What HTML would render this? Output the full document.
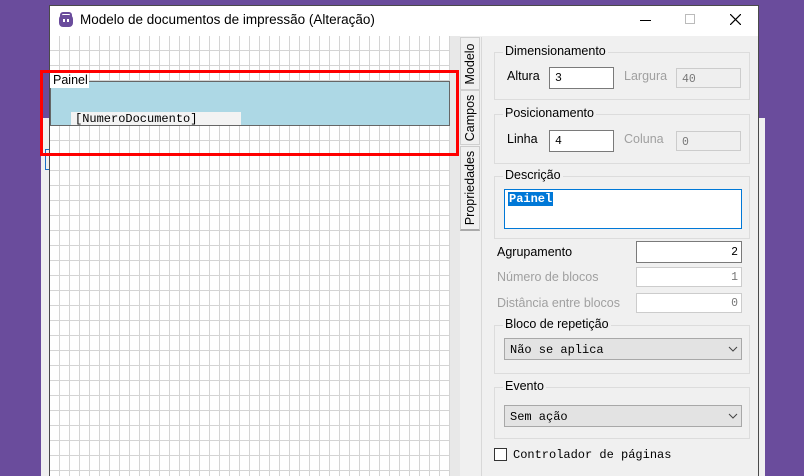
<!DOCTYPE html>
<html><head><meta charset="utf-8"><style>
*{box-sizing:border-box;margin:0;padding:0}
body{width:804px;height:476px;overflow:hidden;background:#6a4c9c;position:relative;font-family:"Liberation Sans",sans-serif;font-size:12px;color:#000}
.a{position:absolute}
.mono{font-family:"Liberation Mono",monospace;font-size:11.5px}
.grp{position:absolute;border:1px solid #dcdcdc;}
.grp .t{position:absolute;top:-9px;left:8px;background:#f0f0f0;padding:0 2px;font-size:12.5px}
.in{position:absolute;background:#fff;border:1px solid #7a7a7a;height:22px;padding:4px 0 0 5px}
.dis{background:#efefef;border:1px solid #ccc;color:#777}
.lbl{position:absolute;font-size:12.5px}
.g{color:#a0a0a0}
.sel{position:absolute;background:#e3e3e3;border:1px solid #a8a8a8;height:22px;padding:4px 0 0 5px}
.tab{position:absolute;left:460px;width:20px;border:1px solid #d0d0d0;background:#f0f0f0}
.tab span{position:absolute;left:50%;top:50%;transform:translate(-50%,-50%) rotate(-90deg);white-space:nowrap;font-size:12.5px}
</style></head><body>
<div class="a" style="left:41px;top:118px;width:12px;height:358px;background:#f0f0f0"></div>
<div class="a" style="left:45px;top:149px;width:6px;height:21px;border:1px solid #1a6fc9;border-right:none"></div>
<div class="a" style="left:756px;top:118px;width:9px;height:358px;background:#f0f0f0"></div>
<div class="a" style="left:49px;top:5px;width:710px;height:471px;background:#f0f0f0;border:1px solid #4a4a4a;border-bottom:none"></div>
<div class="a" style="left:50px;top:6px;width:708px;height:30px;background:#fff"></div>
<svg class="a" style="left:58px;top:12px" width="16" height="16" viewBox="0 0 16 16"><rect x="1" y="3" width="14" height="12" rx="4" fill="#6a4c9c"/><rect x="3" y="1" width="10" height="5" rx="2" fill="none" stroke="#6a4c9c" stroke-width="2"/><rect x="5" y="7" width="2" height="3" fill="#fff"/><rect x="9" y="7" width="2" height="3" fill="#fff"/></svg>
<div class="a" style="left:80px;top:12px;font-size:13.5px">Modelo de documentos de impressão (Alteração)</div>
<div class="a" style="left:640px;top:20px;width:11px;height:1px;background:#000"></div>
<div class="a" style="left:685px;top:14px;width:10px;height:10px;border:1px solid #bbb"></div>
<svg class="a" style="left:730px;top:14px" width="11" height="11"><path d="M0 0L11 11M11 0L0 11" stroke="#000" stroke-width="1.2"/></svg>
<div class="a" style="left:50px;top:36px;width:400px;height:440px;background-color:#fff;background-image:linear-gradient(90deg,#d4d4d4 1px,transparent 1px),linear-gradient(#d4d4d4 1px,transparent 1px);background-size:10px 15px;background-position:9px 14px"></div>
<div class="a" style="left:450px;top:36px;width:10px;height:440px;background:#e8e8e8"></div>
<div class="a" style="left:50px;top:81px;width:400px;height:45px;background:#add8e5;border:1px solid #666"></div>
<div class="a" style="left:50px;top:72px;width:39px;height:16px;background:#fff;padding:1px 0 0 3px;font-size:12.5px">Painel</div>
<div class="a mono" style="left:71px;top:112px;width:170px;height:13px;background:#f3f3f3;padding:0 0 0 4px;line-height:14px;font-size:12px">[NumeroDocumento]</div>
<div class="a" style="left:40px;top:70px;width:419px;height:86px;border:3px solid #f00"></div>
<div class="tab" style="top:37px;height:53px"><span>Modelo</span></div>
<div class="tab" style="top:90px;height:55px"><span>Campos</span></div>
<div class="tab" style="top:146px;height:85px;border-color:#ccc;border-bottom:2px solid #aaa"><span>Propriedades</span></div>
<div class="a" style="left:481px;top:37px;width:1px;height:439px;background:#d8d8d8"></div>
<div class="grp" style="left:494px;top:52px;width:256px;height:48px"><div class="t">Dimensionamento</div></div>
<div class="lbl" style="left:507px;top:69px">Altura</div>
<div class="in mono" style="left:549px;top:67px;width:65px">3</div>
<div class="lbl g" style="left:624px;top:69px">Largura</div>
<div class="in mono dis" style="left:676px;top:68px;width:65px;height:20px">40</div>
<div class="grp" style="left:494px;top:114px;width:256px;height:50px"><div class="t">Posicionamento</div></div>
<div class="lbl" style="left:507px;top:132px">Linha</div>
<div class="in mono" style="left:549px;top:130px;width:65px">4</div>
<div class="lbl g" style="left:624px;top:132px">Coluna</div>
<div class="in mono dis" style="left:676px;top:131px;width:65px;height:20px">0</div>
<div class="grp" style="left:494px;top:176px;width:256px;height:63px"><div class="t">Descrição</div></div>
<div class="a" style="left:504px;top:189px;width:238px;height:40px;background:#fff;border:1px solid #0078d7"></div>
<div class="a mono" style="left:508px;top:192px;background:#0078d7;color:#fff;padding:0 1px;font-weight:bold;font-size:12px">Painel</div>
<div class="lbl" style="left:497px;top:245px">Agrupamento</div>
<div class="in mono" style="left:636px;top:241px;width:106px;text-align:right;padding-right:3px">2</div>
<div class="lbl g" style="left:497px;top:270px">Número de blocos</div>
<div class="in mono" style="left:636px;top:267px;width:106px;border-color:#ccc;color:#777;height:20px;padding-top:3px;text-align:right;padding-right:3px">1</div>
<div class="lbl g" style="left:497px;top:296px">Distância entre blocos</div>
<div class="in mono" style="left:636px;top:293px;width:106px;border-color:#ccc;color:#777;height:20px;padding-top:3px;text-align:right;padding-right:3px">0</div>
<div class="grp" style="left:494px;top:325px;width:256px;height:49px"><div class="t">Bloco de repetição</div></div>
<div class="sel mono" style="left:504px;top:338px;width:238px;font-size:12px">Não se aplica</div>
<div class="grp" style="left:494px;top:387px;width:256px;height:52px"><div class="t">Evento</div></div>
<div class="sel mono" style="left:504px;top:405px;width:238px;font-size:12px">Sem ação</div>
<svg class="a" style="left:728px;top:346px" width="10" height="6"><path d="M1 1L5 5L9 1" stroke="#444" fill="none"/></svg>
<svg class="a" style="left:728px;top:413px" width="10" height="6"><path d="M1 1L5 5L9 1" stroke="#444" fill="none"/></svg>
<div class="a" style="left:494px;top:448px;width:13px;height:13px;border:1px solid #333;background:#fff"></div>
<div class="a mono" style="left:513px;top:448px;font-size:12px">Controlador de páginas</div>
</body></html>
